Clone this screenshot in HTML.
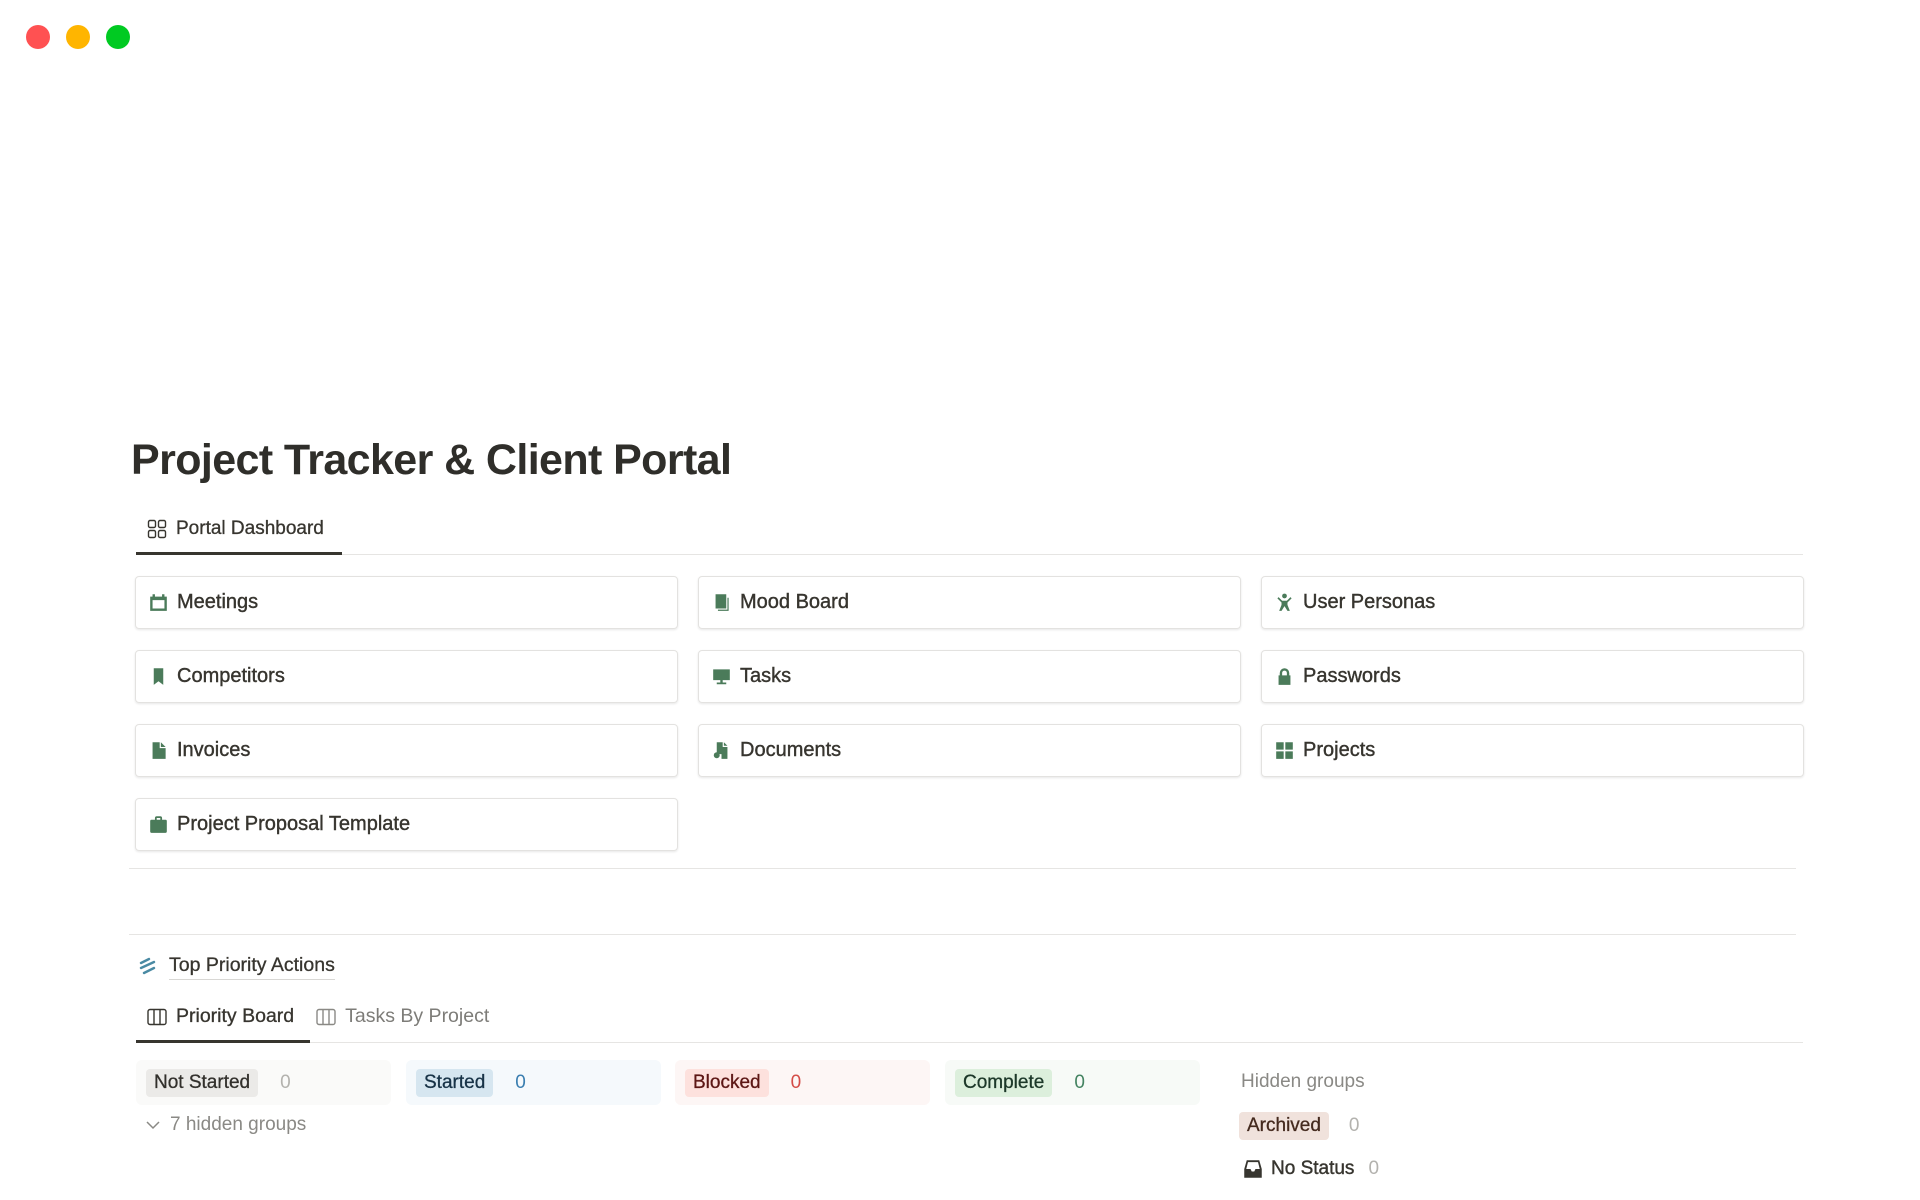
<!DOCTYPE html>
<html><head><meta charset="utf-8"><style>
*{margin:0;padding:0;box-sizing:border-box}
body{width:1920px;height:1200px;background:#fff;font-family:"Liberation Sans",sans-serif;color:#37352f;position:relative;overflow:hidden}
.a{position:absolute}
.dot{position:absolute;top:25px;width:24px;height:24px;border-radius:50%}
.card{position:absolute;width:543px;height:53px;border:1px solid #e3e2e0;border-radius:4px;box-shadow:0 1px 2px rgba(15,15,15,.1);display:flex;align-items:center;padding-left:13px;font-size:20px;-webkit-text-stroke:.4px #37352f}
.card svg{width:19px;height:19px;margin-right:9px;fill:#4b7b5a;-webkit-text-stroke:0}
.col{position:absolute;top:1060px;width:255px;height:45px;border-radius:6px;display:flex;align-items:center;padding-left:10px;font-size:19px}
.tag{padding:2px 8px;border-radius:4px;height:28px;line-height:24px;-webkit-text-stroke:.3px currentColor}
.cnt{margin-left:22px}
.line{position:absolute;height:1px;background:#e6e5e3}
</style></head><body>
<div class="dot" style="left:26px;background:#ff5152"></div>
<div class="dot" style="left:66px;background:#ffb500"></div>
<div class="dot" style="left:106px;background:#00ca22"></div>

<div class="a" style="left:131px;top:436px;font-size:43px;font-weight:bold;letter-spacing:-0.6px;color:#2f2e2a">Project Tracker &amp; Client Portal</div>

<div class="a" style="left:147px;top:518px;display:flex;align-items:center;font-size:19px;-webkit-text-stroke:.3px #37352f">
<svg width="20" height="20" viewBox="0 0 20 20" fill="none" stroke="#37352f" stroke-width="1.4" style="margin-right:9px"><rect x="1.5" y="1.5" width="7" height="7" rx="1.5"/><rect x="11.5" y="1.5" width="7" height="7" rx="1.5"/><rect x="1.5" y="11.5" width="7" height="7" rx="1.5"/><rect x="11.5" y="11.5" width="7" height="7" rx="1.5"/></svg>Portal Dashboard</div>
<div class="line" style="left:136px;top:554px;width:1667px"></div>
<div class="a" style="left:136px;top:552px;width:206px;height:3px;background:#37352f"></div>

<div class="card" style="left:135px;top:576px"><svg viewBox="0 0 16 16"><path d="M3 1h2v2h6V1h2v2h2v12H1V3h2zM3 6v7h10V6z"/></svg>Meetings</div>
<div class="card" style="left:698px;top:576px"><svg viewBox="0 0 16 16"><path d="M3 1h9v12H3zM13 4h1v11H5v-1h8z"/></svg>Mood Board</div>
<div class="card" style="left:1261px;top:576px"><svg viewBox="0 0 16 16"><circle cx="8" cy="2.5" r="2"/><path d="M2 4.5l1-1 3 3h4l3-3 1 1-3.5 3.5V10l2 5h-2L8 11l-2.5 4h-2l2-5V8z"/></svg>User Personas</div>
<div class="card" style="left:135px;top:650px"><svg viewBox="0 0 16 16"><path d="M4 1h8v14l-4-3-4 3z"/></svg>Competitors</div>
<div class="card" style="left:698px;top:650px"><svg viewBox="0 0 16 16"><path d="M1 2h14v9H1zM7 11h2v2h3v1.5H4V13h3z"/></svg>Tasks</div>
<div class="card" style="left:1261px;top:650px"><svg viewBox="0 0 16 16"><path d="M4 7V5a4 4 0 018 0v2h1v8H3V7zm2 0h4V5a2 2 0 00-4 0z"/></svg>Passwords</div>
<div class="card" style="left:135px;top:724px"><svg viewBox="0 0 16 16"><path d="M3 1h6v5h5v9H3zM10 1l4 4h-4z"/></svg>Invoices</div>
<div class="card" style="left:698px;top:724px"><svg viewBox="0 0 16 16"><path d="M4 1h5v4h4v10H8v-4H4zM10 1l3 3h-3z"/><circle cx="4" cy="12" r="2.5"/></svg>Documents</div>
<div class="card" style="left:1261px;top:724px"><svg viewBox="0 0 16 16"><path d="M1 1h6.3v6.3H1zM8.7 1H15v6.3H8.7zM1 8.7h6.3V15H1zM8.7 8.7H15V15H8.7z"/></svg>Projects</div>
<div class="card" style="left:135px;top:798px"><svg viewBox="0 0 16 16"><path d="M5 4V2.5A1.5 1.5 0 016.5 1h3A1.5 1.5 0 0111 2.5V4h3a1 1 0 011 1v9a1 1 0 01-1 1H2a1 1 0 01-1-1V5a1 1 0 011-1zm1.5 0h3V2.5h-3zM1 8h14v1H1z"/></svg>Project Proposal Template</div>

<div class="line" style="left:129px;top:868px;width:1667px"></div>
<div class="line" style="left:129px;top:934px;width:1667px"></div>

<svg class="a" style="left:138px;top:957px" width="20" height="18" viewBox="0 0 20 18" fill="none" stroke="#4a8aa3" stroke-width="2.4" stroke-linecap="round"><path d="M3 6l8-4M3 11l13-6M6 16l10-5"/></svg>
<div class="a" style="left:169px;top:954px;font-size:19.5px;-webkit-text-stroke:.3px #37352f;border-bottom:1px solid #d8d7d4;padding-bottom:2px">Top Priority Actions</div>

<div class="a" style="left:147px;top:1005px;display:flex;align-items:center;font-size:19.5px">
<svg width="20" height="18" viewBox="0 0 20 18" fill="none" stroke="#37352f" stroke-width="1.4" style="margin-right:9px"><rect x="1" y="1.5" width="18" height="15" rx="2"/><path d="M7 1.5v15M13 1.5v15"/></svg><span style="-webkit-text-stroke:.3px #37352f">Priority Board</span>
<svg width="20" height="18" viewBox="0 0 20 18" fill="none" stroke="#8a8985" stroke-width="1.4" style="margin:0 9px 0 22px"><rect x="1" y="1.5" width="18" height="15" rx="2"/><path d="M7 1.5v15M13 1.5v15"/></svg><span style="color:#7d7c78">Tasks By Project</span></div>
<div class="line" style="left:136px;top:1042px;width:1667px"></div>
<div class="a" style="left:136px;top:1040px;width:174px;height:3px;background:#37352f"></div>

<div class="col" style="left:136px;background:#fafaf9"><span class="tag" style="background:#ebeae8;color:#32302c">Not Started</span><span class="cnt" style="color:#b3b2ae">0</span></div>
<div class="col" style="left:406px;background:#f5f9fc"><span class="tag" style="background:#d6e6f0;color:#183347">Started</span><span class="cnt" style="color:#3a7eb0">0</span></div>
<div class="col" style="left:675px;background:#fdf6f5"><span class="tag" style="background:#fde1dd;color:#5d1715">Blocked</span><span class="cnt" style="color:#d44c47">0</span></div>
<div class="col" style="left:945px;background:#f7faf7"><span class="tag" style="background:#dcefdc;color:#1c3829">Complete</span><span class="cnt" style="color:#448361">0</span></div>

<div class="a" style="left:145px;top:1114px;font-size:19px;color:#8a8985;display:flex;align-items:center"><svg width="16" height="12" viewBox="0 0 16 12" fill="none" stroke="#8a8985" stroke-width="1.5" style="margin-right:9px"><path d="M2 3l6 6 6-6"/></svg>7 hidden groups</div>

<div class="a" style="left:1241px;top:1071px;font-size:19px;color:#8a8985">Hidden groups</div>
<div class="a" style="left:1239px;top:1112px;font-size:19px;display:flex;align-items:center"><span class="tag" style="background:#f0e2dc;color:#442a1e">Archived</span><span style="margin-left:20px;color:#b3b2ae">0</span></div>
<div class="a" style="left:1243px;top:1158px;font-size:19px;display:flex;align-items:center"><svg width="20" height="20" viewBox="0 0 16 16" style="margin-right:8px" fill="#37352f"><path d="M3 1h10l2 7v7H1V8zm1 1.5L2.6 8H6l1 2h2l1-2h3.4L12 2.5z"/></svg><span style="-webkit-text-stroke:.4px #37352f">No Status</span><span style="margin-left:14px;color:#b3b2ae">0</span></div>
</body></html>
